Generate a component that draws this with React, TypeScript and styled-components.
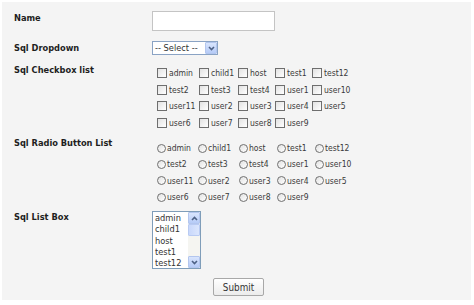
import React from "react";
import styled, { createGlobalStyle } from "styled-components";

const Global = createGlobalStyle`
  html, body { margin: 0; padding: 0; background: #ffffff; }
  body { font-family: "DejaVu Sans Condensed", "DejaVu Sans", sans-serif; color: #222; }
`;

const Panel = styled.div`
  margin: 2px 3px 0 2px;
  height: 298px;
  box-sizing: border-box;
  background: #f4f4f4;
  padding: 9px 0 0 12px;
`;

const Row = styled.div<{ $top: number }>`
  display: grid;
  grid-template-columns: 138px 1fr;
  align-items: start;
  margin-top: ${(p) => p.$top}px;
`;

const Label = styled.div<{ $top?: number }>`
  font-weight: bold;
  font-size: 9.2px;
  line-height: 12px;
  color: #1e1e1e;
  margin-top: ${(p) => p.$top ?? 0}px;
  white-space: nowrap;
`;

const TextInput = styled.div`
  width: 123px;
  height: 20px;
  box-sizing: border-box;
  background: #fff;
  border: 1px solid #c4c4c4;
`;

const Select = styled.div`
  width: 66px;
  height: 14px;
  box-sizing: border-box;
  border: 1px solid #8aa3c4;
  background: #fff;
  display: flex;
  align-items: center;
  font-size: 9.2px;
  color: #333;
`;

const SelectText = styled.span`
  flex: 1;
  padding-left: 2px;
  line-height: 12px;
  white-space: nowrap;
`;

const ArrowBtn = styled.div<{ $h?: number }>`
  width: 12px;
  height: ${(p) => p.$h ?? 12}px;
  box-sizing: border-box;
  background: linear-gradient(#d9e5fd, #b6cbf7);
  border: 1px solid #b3c6ee;
  border-radius: 1px;
  display: flex;
  align-items: center;
  justify-content: center;
`;

const OptionGrid = styled.div<{ $cols: string; $top: number; $rowH: number }>`
  display: grid;
  grid-template-columns: ${(p) => p.$cols};
  grid-auto-rows: ${(p) => p.$rowH}px;
  margin-top: ${(p) => p.$top}px;
  margin-left: 5px;
`;

const Item = styled.div`
  display: flex;
  align-items: center;
  font-size: 8.5px;
  color: #3a3a3a;
  white-space: nowrap;
`;

const Box = styled.span`
  width: 10px;
  height: 10px;
  box-sizing: border-box;
  border: 1px solid #6e6e6e;
  background: linear-gradient(135deg, #e2e2e2, #ffffff);
  margin-right: 2px;
  flex: none;
`;

const Circle = styled.span`
  width: 9px;
  height: 9px;
  box-sizing: border-box;
  border: 1px solid #707070;
  border-radius: 50%;
  background: linear-gradient(135deg, #e2e2e2, #ffffff);
  margin-right: 1px;
  flex: none;
`;

const ListBox = styled.div`
  width: 49px;
  height: 58px;
  box-sizing: border-box;
  border: 1px solid #7f9db9;
  background: #fff;
  display: flex;
`;

const ListItems = styled.div`
  flex: 1;
  padding: 0 0 0 2px;
  font-size: 9.2px;
  line-height: 11.2px;
  color: #333;
  overflow: hidden;
`;

const ScrollBar = styled.div`
  width: 12px;
  display: flex;
  flex-direction: column;
  background: #f5f5f1;
`;

const Track = styled.div`
  flex: 1;
`;

const Thumb = styled.div`
  height: 12px;
  box-sizing: border-box;
  border: 1px solid #b9cbf3;
  background: linear-gradient(90deg, #c9d8fb, #dbe6fd);
  border-radius: 1px;
`;

const Footer = styled.div`
  width: 449px;
  display: flex;
  justify-content: center;
  margin-top: 9px;
`;

const Button = styled.div`
  width: 51px;
  height: 18px;
  box-sizing: border-box;
  border: 1px solid #a8a8a8;
  border-radius: 2px;
  background: linear-gradient(#ffffff, #ececec);
  font-size: 9.8px;
  color: #333;
  display: flex;
  align-items: center;
  justify-content: center;
`;

const Chevron = ({ up }: { up?: boolean }) => (
  <svg width="7" height="5" viewBox="0 0 7 5">
    <path
      d={up ? "M1 4 L3.5 1.5 L6 4" : "M1 1 L3.5 3.5 L6 1"}
      fill="none"
      stroke="#4d6185"
      strokeWidth="1.6"
    />
  </svg>
);

const names = [
  "admin", "child1", "host", "test1", "test12",
  "test2", "test3", "test4", "user1", "user10",
  "user11", "user2", "user3", "user4", "user5",
  "user6", "user7", "user8", "user9",
];

export default function App() {
  return (
    <>
      <Global />
      <Panel>
        <Row $top={0}>
          <Label $top={1}>Name</Label>
          <TextInput />
        </Row>
        <Row $top={10}>
          <Label $top={1}>Sql Dropdown</Label>
          <Select>
            <SelectText>-- Select --</SelectText>
            <ArrowBtn $h={12}>
              <Chevron />
            </ArrowBtn>
          </Select>
        </Row>
        <Row $top={9}>
          <Label>Sql Checkbox list</Label>
          <OptionGrid $cols="42px 39px 37px 37px auto" $top={1} $rowH={16.5}>
            {names.map((n) => (
              <Item key={n}>
                <Box />
                {n}
              </Item>
            ))}
          </OptionGrid>
        </Row>
        <Row $top={6}>
          <Label>Sql Radio Button List</Label>
          <OptionGrid $cols="41px 41px 38px 38px auto" $top={3} $rowH={16.3}>
            {names.map((n) => (
              <Item key={n}>
                <Circle />
                {n}
              </Item>
            ))}
          </OptionGrid>
        </Row>
        <Row $top={6}>
          <Label>Sql List Box</Label>
          <ListBox>
            <ListItems>
              <div>admin</div>
              <div>child1</div>
              <div>host</div>
              <div>test1</div>
              <div>test12</div>
            </ListItems>
            <ScrollBar>
              <ArrowBtn>
                <Chevron up />
              </ArrowBtn>
              <Thumb />
              <Track />
              <ArrowBtn>
                <Chevron />
              </ArrowBtn>
            </ScrollBar>
          </ListBox>
        </Row>
        <Footer>
          <Button>Submit</Button>
        </Footer>
      </Panel>
    </>
  );
}
